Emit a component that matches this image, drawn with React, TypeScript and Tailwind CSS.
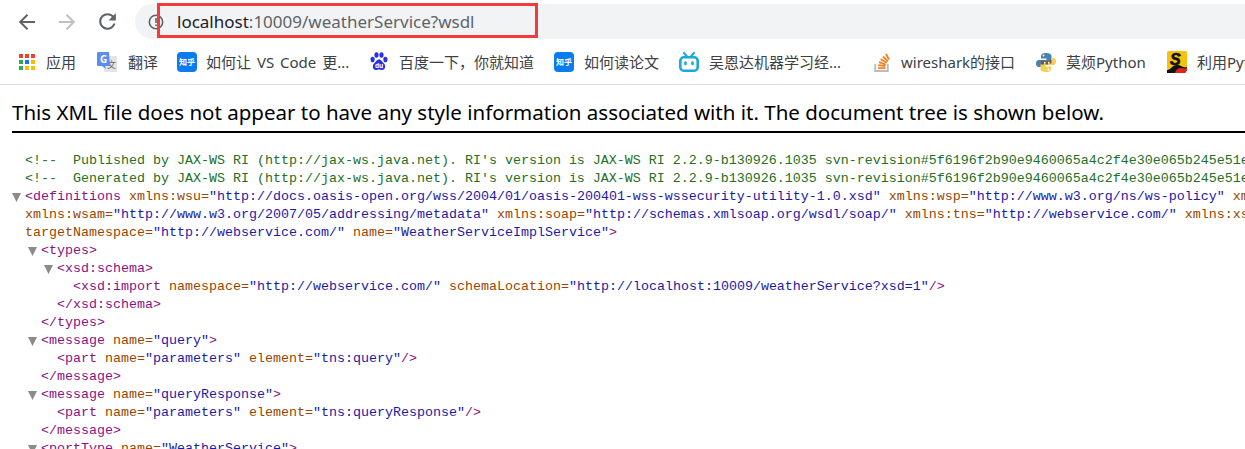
import React from "react";

const UI_FONT = "font-['Noto_Sans','Noto_Sans_CJK_SC',sans-serif]";

// the bookmark bar items, widths are the distance to the next item
const BarIcon = ({ name }: { name: string }) => {
  if (name === "apps") {
    const colors = ["#ea4335", "#ea4335", "#ea4335", "#34a853", "#1a73e8", "#fbbc04", "#34a853", "#fbbc04", "#fbbc04"];
    return (
      <svg width="16" height="16" viewBox="0 0 16 16">
        {colors.map((c, i) => (
          <rect key={i} x={(i % 3) * 6} y={Math.floor(i / 3) * 6} width="4" height="4" fill={c} />
        ))}
      </svg>
    );
  }
  if (name === "translate") {
    return (
      <svg width="20" height="22" viewBox="0 0 20 22">
        <rect x="7" y="5" width="13" height="16" rx="1" fill="#e3e4e6" />
        <text x="10" y="17" fontSize="9" fill="#666" fontFamily="Noto Sans CJK SC">文</text>
        <path d="M1 1h11l1 14H8l1 3-4-3H1a1 1 0 0 1-1-1V2a1 1 0 0 1 1-1z" fill="#5b8def" />
        <text x="3" y="12" fontSize="10" fontWeight="700" fill="#fff" fontFamily="Noto Sans">G</text>
      </svg>
    );
  }
  if (name === "zhihu") {
    return (
      <div className="flex h-5 w-5 items-center justify-center rounded-[4px] bg-[#0a7cf0] font-['Noto_Sans_CJK_SC',sans-serif] text-[8px] font-bold text-white">
        知乎
      </div>
    );
  }
  if (name === "baidu") {
    return (
      <svg width="18" height="20" viewBox="0 0 18 20" fill="#2932e1">
        <ellipse cx="2.6" cy="7.5" rx="2.1" ry="2.7" />
        <ellipse cx="6.5" cy="3" rx="2.1" ry="2.8" />
        <ellipse cx="11.5" cy="3" rx="2.1" ry="2.8" />
        <ellipse cx="15.4" cy="7.5" rx="2.1" ry="2.7" />
        <path d="M9 7.5c2.5 0 3 2.5 5 4 2 1.800 1.500 6.500-2 6.500-1.500 0-2-.5-3-.5s-1.500.5-3 .5c-3.500 0-4-4.700-2-6.500 2-1.500 2.500-4 5-4z" />
        <text x="5" y="16" fontSize="6.500" fontWeight="700" fill="#fff" fontFamily="Noto Sans">du</text>
      </svg>
    );
  }
  if (name === "bili") {
    return (
      <svg width="20" height="20" viewBox="0 0 20 20" fill="none" stroke="#1ba9dd" strokeWidth="2.600">
        <rect x="1.300" y="5.300" width="17.400" height="13.400" rx="3.500" />
        <path d="M5 1l3 3.500M15 1l-3 3.500" strokeLinecap="round" strokeWidth="2" />
        <path d="M6.500 10.500v1.500M13.500 10.500v1.500" strokeLinecap="round" />
      </svg>
    );
  }
  if (name === "so") {
    return (
      <svg width="16" height="20" viewBox="0 0 16 20" fill="none">
        <path d="M1.200 12v7h12.600v-7" stroke="#bcbbbb" strokeWidth="1.800" />
        <path d="M4 16.200h7.500M4.200 13.200l7.200 1M5 10.200l6.800 2.400M6.600 7.200l6.200 3.500M9 4.500l5 4.800M12 2l3 5.500" stroke="#f48024" strokeWidth="1.800" />
      </svg>
    );
  }
  if (name === "python") {
    return (
      <svg width="20" height="21" viewBox="0 0 20 21">
        <path d="M10 1C6 1 5 2.500 5 4v2.500h5.500V8H3C1 8 0 9.500 0 11.500S1 15 3 15h2v-2.500C5 11 6 10 8 10h5c1.500 0 2.500-1 2.500-2.500V4C15.500 2 13.500 1 10 1z" fill="#4a80b0" />
        <path d="M10 20c4 0 5-1.500 5-3v-2.500H9.500V13H17c2 0 3-1.500 3-3.500S19 6 17 6h-2v2.500c0 1.500-1 2.500-3 2.500H7c-1.500 0-2.500 1-2.500 2.500V17c0 2 2 3 5.500 3z" fill="#f0cf5a" />
        <path d="M5 8.500h3v4H5zM9.500 9h2.500v3.500H9.500zM13.500 8h2v3.500h-2z" fill="#7a5a3a" />
        <circle cx="7.500" cy="3.500" r="1" fill="#fff" />
        <circle cx="12.500" cy="17.500" r="1" fill="#fff" />
      </svg>
    );
  }
  return (
    <svg width="20" height="22" viewBox="0 0 20 22">
      <rect x="0" y="0" width="20" height="19" rx="1.500" fill="#f8c010" />
      <path d="M0 22v-3c4 0 5-5 10-5s4 3 10 2v3l-2 3z" fill="#111" />
      <path d="M8 22c1-4 4-5 6-5 2 0 4 1 6 0v2l-2 3z" fill="#e2231a" />
      <text x="3" y="14" fontSize="16" fontWeight="900" fontStyle="italic" fill="#111" stroke="#111" strokeWidth="0.6" fontFamily="Liberation Sans">S</text>
    </svg>
  );
};

const bookmarks = [
  { icon: "apps", label: "应用", w: "w-[78px]", gap: "gap-[11px]" },
  { icon: "translate", label: "翻译", w: "w-[80px]", gap: "gap-[11px]" },
  { icon: "zhihu", label: "如何让 VS Code 更...", w: "w-[193px] [word-spacing:2px]", gap: "gap-[9px]" },
  { icon: "baidu", label: "百度一下，你就知道", w: "w-[184px]", gap: "gap-[11px]" },
  { icon: "zhihu", label: "如何读论文", w: "w-[125px]", gap: "gap-[10px]" },
  { icon: "bili", label: "吴恩达机器学习经...", w: "w-[195px]", gap: "gap-[10px]" },
  { icon: "so", label: "wireshark的接口", w: "w-[162px]", gap: "gap-[11px]" },
  { icon: "python", label: "莫烦Python", w: "w-[131px]", gap: "gap-[10px]" },
  { icon: "s", label: "利用Python", w: "w-[120px]", gap: "gap-[10px]" },
];

// xml tokens: t tag, a attribute, v value, c comment
type Tok = [string, string];
const tokenClass: Record<string, string> = {
  t: "text-[#881280]",
  a: "text-[#994500]",
  v: "text-[#1a1aa6]",
  c: "text-[#236e25]",
};

const tag = (s: string): Tok => ["t", s];
const attr = (name: string, value: string, lead = " "): Tok[] => [
  ["a", `${lead}${name}=`],
  ["v", `"${value}"`],
];

const depthClass = ["pl-0", "pl-[16px]", "pl-[32px]", "pl-[48px]"];

const lines: { depth: number; open?: boolean; toks: Tok[] }[] = [
  { depth: 0, toks: [["c", "<!--  Published by JAX-WS RI (http://jax-ws.java.net). RI's version is JAX-WS RI 2.2.9-b130926.1035 svn-revision#5f6196f2b90e9460065a4c2f4e30e065b245e51e. -->"]] },
  { depth: 0, toks: [["c", "<!--  Generated by JAX-WS RI (http://jax-ws.java.net). RI's version is JAX-WS RI 2.2.9-b130926.1035 svn-revision#5f6196f2b90e9460065a4c2f4e30e065b245e51e. -->"]] },
  {
    depth: 0,
    open: true,
    toks: [
      tag("<definitions"),
      ...attr("xmlns:wsu", "http://docs.oasis-open.org/wss/2004/01/oasis-200401-wss-wssecurity-utility-1.0.xsd"),
      ...attr("xmlns:wsp", "http://www.w3.org/ns/ws-policy"),
      ...attr("xmlns:wsp1_2", "http://schemas"),
    ],
  },
  {
    depth: 0,
    toks: [
      ...attr("xmlns:wsam", "http://www.w3.org/2007/05/addressing/metadata", ""),
      ...attr("xmlns:soap", "http://schemas.xmlsoap.org/wsdl/soap/"),
      ...attr("xmlns:tns", "http://webservice.com/"),
      ...attr("xmlns:xsd", "http://www.w3.org/2001/XMLSchema"),
    ],
  },
  {
    depth: 0,
    toks: [
      ...attr("targetNamespace", "http://webservice.com/", ""),
      ...attr("name", "WeatherServiceImplService"),
      tag(">"),
    ],
  },
  { depth: 1, open: true, toks: [tag("<types>")] },
  { depth: 2, open: true, toks: [tag("<xsd:schema>")] },
  {
    depth: 3,
    toks: [
      tag("<xsd:import"),
      ...attr("namespace", "http://webservice.com/"),
      ...attr("schemaLocation", "http://localhost:10009/weatherService?xsd=1"),
      tag("/>"),
    ],
  },
  { depth: 2, toks: [tag("</xsd:schema>")] },
  { depth: 1, toks: [tag("</types>")] },
  { depth: 1, open: true, toks: [tag("<message"), ...attr("name", "query"), tag(">")] },
  { depth: 2, toks: [tag("<part"), ...attr("name", "parameters"), ...attr("element", "tns:query"), tag("/>")] },
  { depth: 1, toks: [tag("</message>")] },
  { depth: 1, open: true, toks: [tag("<message"), ...attr("name", "queryResponse"), tag(">")] },
  { depth: 2, toks: [tag("<part"), ...attr("name", "parameters"), ...attr("element", "tns:queryResponse"), tag("/>")] },
  { depth: 1, toks: [tag("</message>")] },
  { depth: 1, open: true, toks: [tag("<portType"), ...attr("name", "WeatherService"), tag(">")] },
];

const App = () => {
  return (
    <div className="relative h-[449px] w-[1245px] overflow-hidden bg-white">
      {/* browser toolbar */}
      <div className="flex h-[43px] items-center">
        <div className="flex w-[135px] items-center pl-[18px]">
          <svg width="18" height="18" viewBox="0 0 18 18" fill="#5f6368">
            <path d="M17 8H4.600l5.600-5.600L8.800 1 .8 9l8 8 1.400-1.400L4.600 10H17z" />
          </svg>
          <svg className="ml-[22px]" width="18" height="18" viewBox="0 0 18 18" fill="#bdc1c6">
            <path d="M1 8h12.400L7.800 2.400 9.200 1l8 8-8 8-1.400-1.400L13.400 10H1z" />
          </svg>
          <svg className="ml-[19px]" width="25" height="25" viewBox="0 0 24 24" fill="#5f6368">
            <path d="M17.650 6.350A7.960 7.960 0 0 0 12 4a8 8 0 1 0 7.730 10h-2.080A6 6 0 1 1 12 6c1.660 0 3.140.69 4.220 1.780L13 11h7V4l-2.350 2.350z" />
          </svg>
        </div>
        <div className={`flex h-[35px] flex-1 items-center rounded-l-full bg-[#f1f3f4] pl-[13px] ${UI_FONT}`}>
          <svg width="16" height="16" viewBox="0 0 16 16" fill="none" stroke="#5f6368" strokeWidth="1.600">
            <circle cx="8" cy="8" r="6.700" />
            <path d="M8 4v5M8 10.500v1.600" />
          </svg>
          <div className="ml-[13px] text-[17px] leading-none">
            <span className="text-[#202124]">localhost</span>
            <span className="text-[#5f6368]">:10009/weatherService?wsdl</span>
          </div>
        </div>
      </div>

      {/* bookmarks */}
      <div className={`flex h-[42px] items-center border-b border-[#dadce0] pb-[3px] pl-[19px] text-[15px] whitespace-nowrap text-[#3c4043] ${UI_FONT}`}>
        {bookmarks.map((b, i) => (
          <div key={i} className={`flex shrink-0 items-center ${b.w} ${b.gap}`}>
            <BarIcon name={b.icon} />
            <span>{b.label}</span>
          </div>
        ))}
      </div>

      {/* chrome's xml viewer header */}
      <div className={`ml-[12px] flex h-[48px] items-end border-b-2 border-black pb-[5px] text-[20.5px] leading-[28px] whitespace-nowrap text-black ${UI_FONT}`}>
        This XML file does not appear to have any style information associated with it. The document tree is shown below.
      </div>

      {/* xml tree */}
      <div className="pt-[19px] pl-[12px] font-['Liberation_Mono',monospace] text-[13.33px] leading-[18px] whitespace-pre">
        {lines.map((line, i) => (
          <div key={i} className={`flex h-[18px] items-center ${depthClass[line.depth]}`}>
            <div className="w-[13px] shrink-0">
              {line.open && (
                <svg width="9" height="9" viewBox="0 0 9 9" fill="#8a8a8a">
                  <path d="M0 0h9L4.500 9z" />
                </svg>
              )}
            </div>
            <div>
              {line.toks.map((tok, j) => (
                <span key={j} className={tokenClass[tok[0]]}>
                  {tok[1]}
                </span>
              ))}
            </div>
          </div>
        ))}
      </div>

      {/* red annotation drawn over the address */}
      <div className="absolute top-[3px] left-[157px] h-[35px] w-[381px] border-[3px] border-[#f33b3b]" />
    </div>
  );
};

export default App;
